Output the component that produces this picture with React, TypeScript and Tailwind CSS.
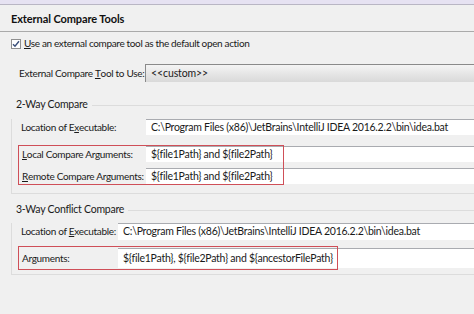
const font = { fontFamily: 'Lato, "Noto Sans", sans-serif' };

function Field({ text, className = "" }: { text: string; className?: string }) {
  return (
    <div
      className={`flex-1 flex items-center bg-white border-t border-[#a9abb0] pl-[5px] text-[10.5px] tracking-[-0.25px] text-[#1a1a1a] whitespace-nowrap overflow-hidden ${className}`}
    >
      {text}
    </div>
  );
}

function Legend({ label }: { label: string }) {
  return (
    <div className="flex items-center h-[14px] pl-[16px] text-[10.5px] tracking-[-0.25px] text-[#1a1a1a]">
      <span className="pr-[4px]">{label}</span>
      <div className="flex-1 h-px bg-[#dcdcdc]" />
    </div>
  );
}

const label = "flex items-center text-[10px] tracking-[-0.3px] text-[#1a1a1a] whitespace-nowrap";

export default function App() {
  const path = "C:\\Program Files (x86)\\JetBrains\\IntelliJ IDEA 2016.2.2\\bin\\idea.bat";
  return (
    <div className="w-[474px] h-[314px] bg-[#f0f0f0] overflow-hidden" style={font}>
      {/* window chrome strip */}
      <div className="h-[4px] bg-[#e6e2f2]" />
      <div className="h-px bg-[#b9b6c4]" />

      {/* title */}
      <div className="h-[27px] pt-[2px] flex items-center pl-[11px] font-bold text-[11px] tracking-[-0.1px] text-[#111] border-b border-[#aaaaaa]">
        External Compare Tools
      </div>

      {/* checkbox */}
      <div className="h-[22px] pt-[1px] flex items-center pl-[11px] text-[10px] tracking-[-0.35px] text-[#1a1a1a]">
        <div className="w-[10px] h-[10px] border border-[#8f8f8f] bg-white flex items-center justify-center mr-[3px]">
          <svg width="8" height="8" viewBox="0 0 8 8">
            <path d="M1 4.2 L3 6.3 L7 1.2" fill="none" stroke="#3a4f7a" strokeWidth="1.4" />
          </svg>
        </div>
        <span>
          <span className="underline">U</span>se an external compare tool as the default open action
        </span>
      </div>

      {/* tool combo */}
      <div className="mt-[10px] h-[18px] flex items-center">
        <div className={`w-[145px] pl-[19px] ${label}`}>
          External Compare&nbsp;<span className="underline">T</span>ool to Use:
        </div>
        <div className="flex-1 h-full flex items-center border-t border-l border-[#8a8a8a] bg-gradient-to-b from-[#f4f4f4] to-[#d9d9d9] pl-[5px] text-[10.5px] tracking-[-0.1px] text-[#1a1a1a]">
          &lt;&lt;custom&gt;&gt;
        </div>
      </div>

      {/* 2-way group */}
      <div className="mt-[16px]">
        <Legend label="2-Way Compare" />
        <div className="ml-[11px] border-l border-b border-[#dcdcdc] pb-[8px]">
          <div className="mt-[7px] h-[16px] flex">
            <div className={`w-[134px] pl-[9px] ${label}`}>
              Location of E<span className="underline">x</span>ecutable:
            </div>
            <Field text={path} />
          </div>
          <div className="mt-[10px] relative">
            <div className="flex flex-col gap-[6px] py-[1px]">
              <div className="h-[16px] flex">
                <div className={`w-[134px] pl-[10px] ${label}`}>
                  <span className="underline">L</span>ocal Compare Arguments:
                </div>
                <Field text="${file1Path} and ${file2Path}" />
              </div>
              <div className="h-[16px] flex">
                <div className={`w-[134px] pl-[10px] ${label}`}>
                  <span className="underline">R</span>emote Compare Arguments:
                </div>
                <Field text="${file1Path} and ${file2Path}" />
              </div>
            </div>
            <div className="absolute left-[6px] top-0 bottom-0 w-[266px] border border-[#cf4f58] pointer-events-none" />
          </div>
        </div>
      </div>

      {/* 3-way group */}
      <div className="mt-[9px]">
        <Legend label="3-Way Conflict Compare" />
        <div className="ml-[11px] border-l border-b border-[#dcdcdc] pb-[4px]">
          <div className="mt-[6px] h-[17px] flex">
            <div className={`w-[106px] pl-[9px] ${label}`}>
              Location of&nbsp;<span className="underline">E</span>xecutable:
            </div>
            <Field text={path} />
          </div>
          <div className="mt-[6px] relative">
            <div className="h-[24px] flex py-[2px]">
              <div className={`w-[106px] pl-[10px] ${label}`}>Arguments:</div>
              <Field text="${file1Path}, ${file2Path} and ${ancestorFilePath}" />
            </div>
            <div className="absolute left-[6px] top-0 bottom-0 w-[320px] border border-[#cf4f58] pointer-events-none" />
          </div>
        </div>
      </div>
    </div>
  );
}
